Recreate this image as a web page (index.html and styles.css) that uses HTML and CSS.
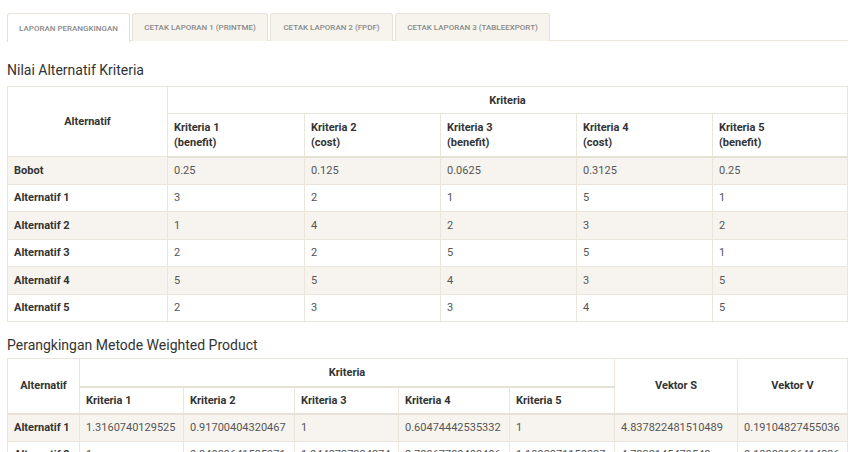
FILE: index.html
```html
<!DOCTYPE html>
<html>
<head>
<meta charset="utf-8">
<link rel="stylesheet" href="styles.css">
</head>
<body>
<div class="page">
  <ul class="tabs">
    <li class="tab active">LAPORAN PERANGKINGAN</li>
    <li class="tab">CETAK LAPORAN 1 (PRINTME)</li>
    <li class="tab">CETAK LAPORAN 2 (FPDF)</li>
    <li class="tab">CETAK LAPORAN 3 (TABLEEXPORT)</li>
  </ul>

  <h3 class="title t1">Nilai Alternatif Kriteria</h3>
  <table class="grid g1">
    <colgroup>
      <col style="width:160px"><col style="width:137px"><col style="width:136px"><col style="width:136px"><col style="width:136px"><col>
    </colgroup>
    <thead>
      <tr class="h1"><th rowspan="2" class="c">Alternatif</th><th colspan="5" class="c">Kriteria</th></tr>
      <tr class="h2"><th>Kriteria 1<br>(benefit)</th><th>Kriteria 2<br>(cost)</th><th>Kriteria 3<br>(benefit)</th><th>Kriteria 4<br>(cost)</th><th>Kriteria 5<br>(benefit)</th></tr>
    </thead>
    <tbody>
      <tr><th>Bobot</th><td>0.25</td><td>0.125</td><td>0.0625</td><td>0.3125</td><td>0.25</td></tr>
      <tr><th>Alternatif 1</th><td>3</td><td>2</td><td>1</td><td>5</td><td>1</td></tr>
      <tr><th>Alternatif 2</th><td>1</td><td>4</td><td>2</td><td>3</td><td>2</td></tr>
      <tr><th>Alternatif 3</th><td>2</td><td>2</td><td>5</td><td>5</td><td>1</td></tr>
      <tr><th>Alternatif 4</th><td>5</td><td>5</td><td>4</td><td>3</td><td>5</td></tr>
      <tr><th>Alternatif 5</th><td>2</td><td>3</td><td>3</td><td>4</td><td>5</td></tr>
    </tbody>
  </table>

  <h3 class="title t2">Perangkingan Metode Weighted Product</h3>
  <table class="grid g2">
    <colgroup>
      <col style="width:72px"><col style="width:104px"><col style="width:111px"><col style="width:104px"><col style="width:111px"><col style="width:105px"><col style="width:123px"><col>
    </colgroup>
    <thead>
      <tr class="h1"><th rowspan="2" class="c">Alternatif</th><th colspan="5" class="c">Kriteria</th><th rowspan="2" class="c">Vektor S</th><th rowspan="2" class="c">Vektor V</th></tr>
      <tr class="h2b"><th>Kriteria 1</th><th>Kriteria 2</th><th>Kriteria 3</th><th>Kriteria 4</th><th>Kriteria 5</th></tr>
    </thead>
    <tbody>
      <tr><th>Alternatif 1</th><td>1.3160740129525</td><td>0.91700404320467</td><td>1</td><td>0.60474442535332</td><td>1</td><td>4.837822481510489</td><td>0.19104827455036</td></tr>
      <tr><th>Alternatif 2</th><td>1</td><td>0.84089641525371</td><td>1.0442737824274</td><td>0.70967780403406</td><td>1.1892071150027</td><td>4.7832145479548</td><td>0.18889186414336</td></tr>
    </tbody>
  </table>
</div>
</body>
</html>
```
FILE: styles.css
```css
* { box-sizing: border-box; }
html, body { margin: 0; padding: 0; background: #fff; }
body {
  font-family: Roboto, "Liberation Sans", Arial, sans-serif;
  color: #555;
  font-size: 11px;
  overflow: hidden;
}
.page { padding: 13px 13px 0 7px; }

.tabs {
  list-style: none;
  margin: 0;
  padding: 0;
  display: flex;
  gap: 2px;
  border-bottom: 1px solid #ece6dc;
  height: 28px;
}
.tab {
  height: 28px;
  padding: 0 4px;
  display: flex;
  align-items: center;
  justify-content: center;
  white-space: nowrap;
  font-size: 8px;
  font-weight: 500;
  color: #8a8a8a;
  background: #f7f4ee;
  border: 1px solid #e6e0d6;
  border-bottom: none;
  border-radius: 3px 3px 0 0;
  flex: none;
}
.tab.active {
  background: #fff;
  height: 29px;
  margin-bottom: -1px;
  width: 123px;
}
.tab:nth-child(2) { width: 136px; }
.tab:nth-child(3) { width: 123px; }
.tab:nth-child(4) { width: 155px; }

.title {
  margin: 0;
  font-size: 14px;
  font-weight: 400;
  color: #333;
  line-height: 16px;
}
.t1 { margin-top: 21px; margin-bottom: 8px; }
.t2 { margin-top: 15px; margin-bottom: 5px; }

.grid {
  border-collapse: collapse;
  table-layout: fixed;
  width: 841px;
  border: 1px solid #ebe5db;
}
.grid th, .grid td {
  border: 1px solid #ebe5db;
  padding: 0 6px;
  text-align: left;
  vertical-align: middle;
  line-height: 15px;
  height: 27.5px;
  white-space: nowrap;
}
.grid th {
  font-weight: 700;
  color: #333;
}
.grid th.c { text-align: center; }
.grid tbody tr:nth-child(odd) { background: #f7f4ef; }
.g1 .h1 th { height: 27px; }
.g1 .h2 th { height: 43px; border-bottom: 2px solid #e6e0d6; }
.g2 thead tr.h1 th { height: 28px; }
.g2 .h1 th.c[colspan] { border-bottom: 2px solid #e6e0d6; }
.g2 .h2b th { height: 27px; border-bottom: 2px solid #e6e0d6; }
.g2 .h1 th[rowspan] { border-bottom: 2px solid #e6e0d6; }
```
